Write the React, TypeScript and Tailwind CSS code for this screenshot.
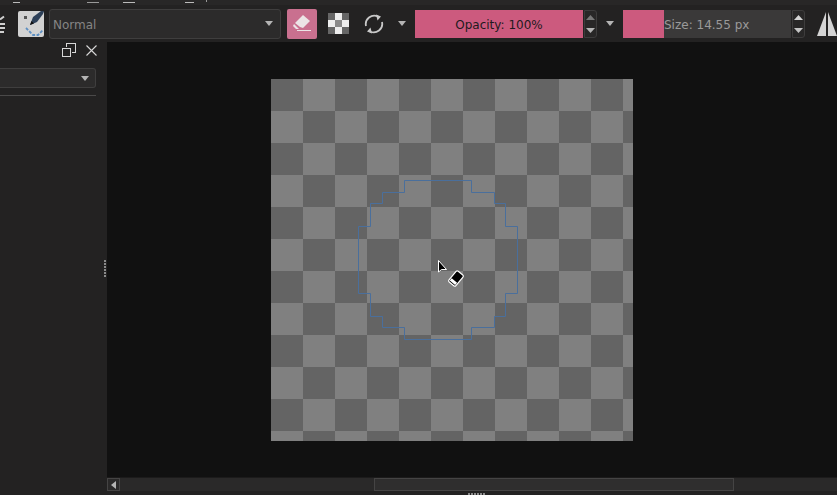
import React from "react";

function Caret({ className = "" }: { className?: string }) {
  return (
    <svg width="8" height="5" viewBox="0 0 8 5" className={className}>
      <path d="M0 0h8L4 5z" fill="#b4b4b4" />
    </svg>
  );
}

function Spinner({ up, down }: { up: string; down: string }) {
  return (
    <div className="w-[14px] h-[28px] ml-px border border-[#3d3c3c] rounded-r-[3px] bg-[#282727] flex flex-col items-center justify-center gap-[8px]">
      <svg width="9" height="5" viewBox="0 0 9 5"><path d="M4.5 0L9 5H0z" fill={up} /></svg>
      <svg width="9" height="5" viewBox="0 0 9 5"><path d="M0 0h9L4.5 5z" fill={down} /></svg>
    </div>
  );
}

const outline =
  "M404.5 180.5H471.5V192.5H494.5V203.5H505.5V226.5H517.5V293.5H505.5V316.5H494.5V327.5H471.5V339.5H404.5V327.5H382.5V316.5H370.5V293.5H358.5V226.5H370.5V203.5H382.5V192.5H404.5Z";

export default function App() {
  return (
    <div className="w-[837px] h-[495px] overflow-hidden flex flex-col bg-[#232222] font-['DejaVu_Sans',sans-serif] text-[12px]">
      {/* menu strip remainder */}
      <div className="h-[5px] bg-[#282727] flex items-start shrink-0">
        <div className="w-[7px] h-px bg-[#bbb] ml-[13px] mt-[2px]" />
        <div className="w-[12px] h-px bg-[#999] ml-[67px] mt-[2px]" />
        <div className="w-[12px] h-px bg-[#bbb] ml-[24px] mt-[2px]" />
        <div className="w-[9px] h-px bg-[#bbb] ml-[50px] mt-[2px]" />
        <div className="w-px h-[2px] bg-[#999] ml-[12px]" />
      </div>

      {/* toolbar */}
      <div className="h-[37px] shrink-0 flex items-center bg-[#232222]">
        <svg width="5" height="18" viewBox="0 0 5 18" className="shrink-0">
          <path d="M0 4.5L4 1.5M0 9h5M0 13h5M0 17h4" stroke="#d0d0d0" strokeWidth="2" fill="none" />
        </svg>
        <svg width="26" height="26" viewBox="0 0 26 26" className="ml-[13px] shrink-0">
          <rect width="26" height="26" rx="2" fill="#d2d2d2" />
          <rect x="6" y="5" width="3" height="3" fill="#555" />
          <path d="M8 17l4 4 3 3h5l5-5" stroke="#5d8fc2" strokeWidth="1.8" strokeDasharray="3 1.5" fill="none" />
          <path d="M26 0L23 0 15 6l-3 8 7-3 6-8z" fill="#2d4058" />
          <path d="M12 14l1.5-4 2.5 2.5z" fill="#111" />
        </svg>
        <div className="w-[232px] h-[30px] ml-[5px] shrink-0 rounded-[3px] border border-[#3f3e3e] bg-[#2c2b2b] flex items-center justify-between pl-[3px] pr-[7px] text-[#858585]">
          <span className="pt-[2px]">Normal</span>
          <Caret />
        </div>
        <div className="w-[30px] h-[30px] ml-[6px] shrink-0 rounded-[2px] bg-[#c9708f] flex items-center justify-center">
          <svg width="22" height="20" viewBox="0 0 22 20">
            <path d="M12 1l7 6-7 7-3-1-5-4z" fill="#ece4e6" />
            <path d="M3 10l5 5H5l-3-3z" fill="#ece4e6" />
            <path d="M6 16.5h14" stroke="#ece4e6" strokeWidth="1" />
          </svg>
        </div>
        <svg width="21" height="21" viewBox="0 0 3 3" shapeRendering="crispEdges" className="ml-[11px] shrink-0">
          <rect width="3" height="3" fill="#eeeeee" />
          <rect x="0" y="0" width="1" height="1" fill="#666666" />
          <rect x="2" y="0" width="1" height="1" fill="#666666" />
          <rect x="1" y="1" width="1" height="1" fill="#8a8a8a" />
          <rect x="0" y="2" width="1" height="1" fill="#666666" />
          <rect x="2" y="2" width="1" height="1" fill="#666666" />
        </svg>
        <svg width="20" height="20" viewBox="0 0 20 20" className="ml-[15px] shrink-0" fill="none" stroke="#c8c8c8" strokeWidth="1.8">
          <path d="M2 12A8.5 8.5 0 0 1 14 2.5" />
          <path d="M18 8A8.5 8.5 0 0 1 6 17.5" />
          <path d="M12 0.5L17 2.5l-3.5 4z" fill="#c8c8c8" stroke="none" />
          <path d="M8 19.5L3 17.5l3.5-4z" fill="#c8c8c8" stroke="none" />
        </svg>
        <Caret className="ml-[14px] shrink-0" />
        <div className="w-[168px] h-[28px] ml-[9px] shrink-0 bg-[#cc5a7e] flex items-center justify-center text-[#1f1a20]">
          <span className="pt-[2px]">Opacity: 100%</span>
        </div>
        <Spinner up="#777777" down="#b4b4b4" />
        <Caret className="ml-[9px] shrink-0" />
        <div className="w-[168px] h-[28px] ml-[9px] shrink-0 bg-[#3a3939] flex items-center text-[#9a9a9a]">
          <div className="w-[41px] h-full bg-[#cc5a7e] shrink-0" />
          <span className="pt-[2px]">Size: 14.55 px</span>
        </div>
        <Spinner up="#d4d4d4" down="#c4c4c4" />
        <svg width="20" height="24" viewBox="0 0 20 24" className="ml-[12px] shrink-0">
          <path d="M9 0V24H0z" fill="#d4d4d4" />
          <path d="M11 0V24H20z" fill="#d4d4d4" />
        </svg>
      </div>

      {/* main */}
      <div className="flex-1 flex min-h-0">
        {/* docker */}
        <div className="w-[107px] shrink-0 bg-[#232222] flex flex-col relative">
          <div className="h-[26px] flex items-start pt-px justify-end pr-[10px] gap-[10px] shrink-0">
            <svg width="14" height="14" viewBox="0 0 14 14" fill="none" stroke="#d8d8d8" strokeWidth="1" shapeRendering="crispEdges">
              <path d="M4.5 4V0.5H13.5V9.5H9.5" />
              <rect x="0.5" y="5.5" width="8" height="8" />
            </svg>
            <svg width="11" height="11" viewBox="0 0 11 11" fill="none" stroke="#d8d8d8" strokeWidth="1.1" className="mt-[2px]">
              <path d="M0.5 0.5L10.5 10.5M10.5 0.5L0.5 10.5" />
            </svg>
          </div>
          <div className="w-[96px] h-[20px] shrink-0 rounded-r-[3px] border border-l-0 border-[#3f3e3e] bg-[#2c2b2b] flex items-center justify-end pr-[6px]">
            <Caret />
          </div>
          <div className="w-[96px] h-px mt-[7px] bg-[#4a4949] shrink-0" />
          <div className="absolute right-[1px] top-[218px] w-[2px] flex flex-col gap-px">
            {[0, 1, 2, 3, 4, 5].map((i) => (
              <div key={i} className="h-[2px] bg-[#8a8a8a]" />
            ))}
          </div>
        </div>

        {/* canvas + scrollbar */}
        <div className="flex-1 flex flex-col min-w-0">
          <div className="h-[435px] shrink-0 bg-[#111111] pl-[164px] pt-[37px]">
            <div className="relative w-[362px] h-[362px] bg-[conic-gradient(#808080_25%,#646464_0_50%,#808080_0_75%,#646464_0)] bg-[size:64px_64px]">
              <svg width="362" height="362" viewBox="271 79 362 362" className="absolute inset-0">
                <path d={outline} fill="none" stroke="#4a6f9c" strokeWidth="1" />
                <path d="M438.5 260.5V272L441.5 269.5H446.5Z" fill="#000" stroke="#fff" strokeWidth="1" />
                <g transform="translate(456 278.5) rotate(40)">
                  <rect x="-4.5" y="-7" width="9" height="14" rx="1.5" fill="#000" stroke="#fff" strokeWidth="1.2" />
                  <rect x="-3.5" y="2.5" width="7" height="3" fill="#fff" />
                </g>
              </svg>
            </div>
          </div>
          <div className="h-[14px] shrink-0 bg-[#2a2929] border-t border-[#1c1b1b] flex">
            <div className="w-[13px] h-[13px] border border-[#454444] bg-[#2a2929] flex items-center justify-center shrink-0">
              <svg width="5" height="8" viewBox="0 0 5 8"><path d="M5 0V8L0 4z" fill="#b4b4b4" /></svg>
            </div>
            <div className="w-[360px] h-[13px] ml-[254px] border border-[#454444] bg-[#2f2e2e] shrink-0" />
          </div>
          <div className="flex-1 bg-[#232222] flex justify-start pl-[361px]">
            <div className="mt-[2px] flex gap-px">
              {[0, 1, 2, 3, 4, 5].map((i) => (
                <div key={i} className="w-[2px] h-[2px] bg-[#8a8a8a]" />
              ))}
            </div>
          </div>
        </div>
      </div>
    </div>
  );
}
